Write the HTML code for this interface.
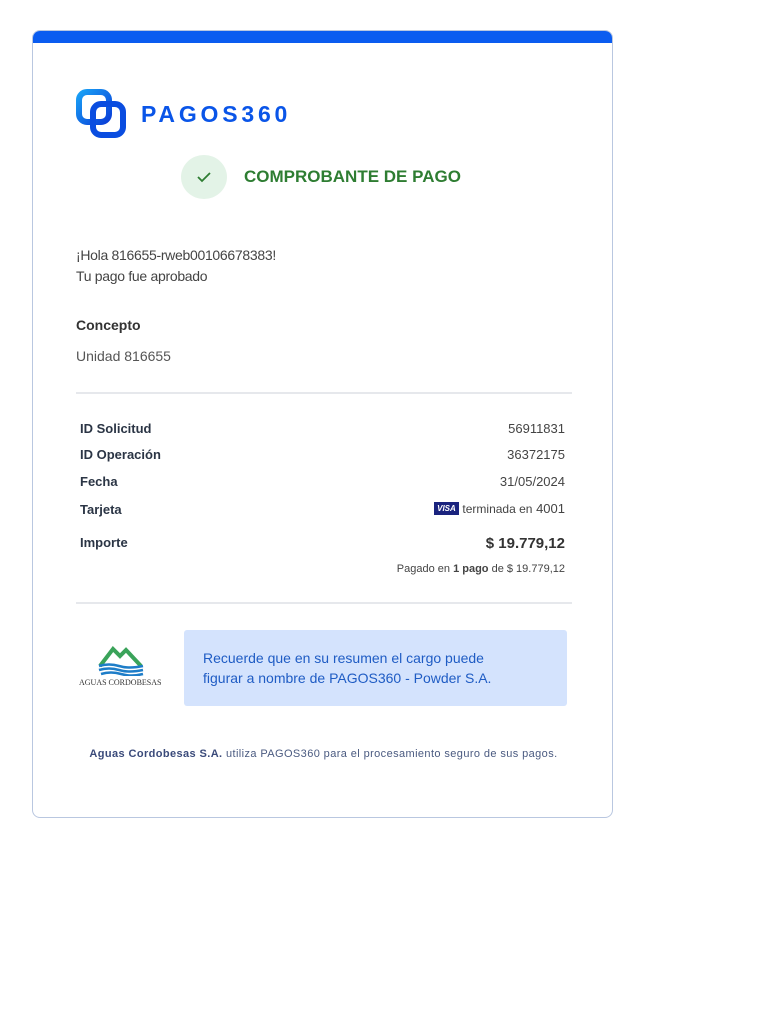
<!DOCTYPE html>
<html><head><meta charset="utf-8"><style>
*{margin:0;padding:0;box-sizing:border-box}
body{width:768px;height:1024px;background:#fff;font-family:"Liberation Sans",Arial,sans-serif;position:relative}
.card{position:absolute;left:32px;top:30px;width:581px;height:788px;border:1px solid #b9c7e0;border-radius:8px;overflow:hidden}
.bar{height:12px;background:#0a5cf0}
.abs{position:absolute}
.lbl{font-weight:bold;font-size:13px;color:#2b3545;left:47px}
.val{font-size:13px;color:#444;right:47px;text-align:right}
.hr{position:absolute;left:43px;width:496px;height:2px;background:#e6e8ec}
</style></head><body>
<div class="card">
<div class="bar"></div>
<svg class="abs" style="left:43px;top:58px" width="52" height="50" viewBox="0 0 52 50">
<defs><linearGradient id="g" x1="0" y1="0" x2="1" y2="1"><stop offset="0" stop-color="#19a0f5"/><stop offset="1" stop-color="#0a3fd8"/></linearGradient></defs>
<rect x="3" y="3" width="30" height="30" rx="8" fill="none" stroke="url(#g)" stroke-width="6"/>
<rect x="17" y="15" width="30" height="31" rx="8" fill="none" stroke="#0a4de0" stroke-width="6"/>
</svg>
<div class="abs" style="left:108px;top:70px;font-size:23px;font-weight:bold;color:#0a55e8;letter-spacing:3.8px">PAGOS360</div>
<div class="abs" style="left:148px;top:124px;width:46px;height:44px;border-radius:50%;background:#e3f3e7"></div>
<svg class="abs" style="left:163px;top:139px" width="16" height="14" viewBox="0 0 16 14"><path d="M2 7 L6 11 L14 3" fill="none" stroke="#2e7d32" stroke-width="1.8"/></svg>
<div class="abs" style="left:211px;top:136px;font-size:17px;font-weight:bold;color:#2e7d32">COMPROBANTE DE PAGO</div>
<div class="abs" style="left:43px;top:214px;font-size:14px;color:#444;line-height:21px;letter-spacing:-0.3px">¡Hola 816655-rweb00106678383!<br>Tu pago fue aprobado</div>
<div class="abs" style="left:43px;top:286px;font-size:14px;font-weight:bold;color:#333">Concepto</div>
<div class="abs" style="left:43px;top:317px;font-size:14px;color:#555">Unidad 816655</div>
<div class="hr" style="top:361px"></div>
<div class="abs lbl" style="top:390px">ID Solicitud</div><div class="abs val" style="top:390px">56911831</div>
<div class="abs lbl" style="top:416px">ID Operación</div><div class="abs val" style="top:416px">36372175</div>
<div class="abs lbl" style="top:443px">Fecha</div><div class="abs val" style="top:443px">31/05/2024</div>
<div class="abs lbl" style="top:471px">Tarjeta</div>
<div class="abs val" style="top:470px"><span style="display:inline-block;background:#1a237e;color:#fff;font-size:8px;font-weight:bold;font-style:italic;padding:2px 3px;vertical-align:2px">VISA</span> <span style="font-size:12px">terminada en</span> 4001</div>
<div class="abs lbl" style="top:504px">Importe</div>
<div class="abs val" style="top:504px;font-size:15px;font-weight:bold;color:#333">$ 19.779,12</div>
<div class="abs val" style="top:532px;font-size:11px">Pagado en <b>1 pago</b> de $ 19.779,12</div>
<div class="hr" style="top:571px"></div>
<svg class="abs" style="left:64px;top:615px" width="50" height="30" viewBox="0 0 50 30">
<path d="M3 20 L16 3 L23 10 L29 4 L44 20" fill="none" stroke="#3aa35a" stroke-width="4"/>
<path d="M2 20 Q12 17 22 20 T46 20 M2 24 Q12 21 22 24 T46 24 M4 28 Q14 25 24 28 T46 28" fill="none" stroke="#1e7dc8" stroke-width="2.5"/>
</svg>
<div class="abs" style="left:46px;top:647px;font-size:8px;color:#333;font-family:'Liberation Serif',serif">AGUAS CORDOBESAS</div>
<div class="abs" style="left:151px;top:599px;width:383px;height:76px;background:#d4e3fd;border-radius:3px;padding:18px 19px;font-size:14px;line-height:20px;color:#1f5cc4">Recuerde que en su resumen el cargo puede<br>figurar a nombre de PAGOS360 - Powder S.A.</div>
<div class="abs" style="left:0;width:581px;top:717px;text-align:center;font-size:11px;color:#4a5a80;letter-spacing:0.4px"><b style="color:#3a4a7a">Aguas Cordobesas S.A.</b> utiliza PAGOS360 para el procesamiento seguro de sus pagos.</div>
</div>
</body></html>
